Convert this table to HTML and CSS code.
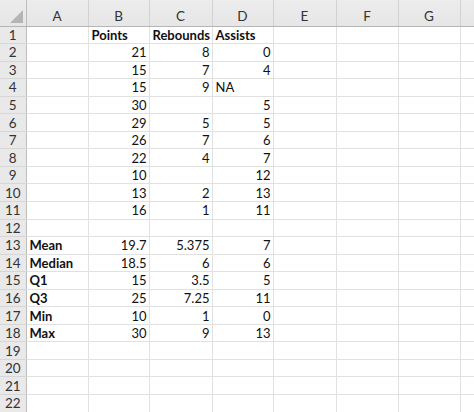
FILE: index.html
```html
<!DOCTYPE html>
<html>
<head>
<meta charset="utf-8">
<link rel="stylesheet" href="styles.css">
</head>
<body>
<table class="sheet">
  <colgroup>
    <col class="w-rh"><col class="w-a"><col class="w-b"><col class="w-c"><col class="w-d"><col class="w-e"><col class="w-f"><col class="w-g"><col class="w-h">
  </colgroup>
  <thead>
    <tr class="hdr">
      <th class="corner"><span class="tri"></span></th>
      <th>A</th><th>B</th><th>C</th><th>D</th><th>E</th><th>F</th><th>G</th><th class="last"></th>
    </tr>
  </thead>
  <tbody>
    <tr><th>1</th><td></td><td class="b">Points</td><td class="b">Rebounds</td><td class="b">Assists</td><td></td><td></td><td></td><td></td></tr>
    <tr><th>2</th><td></td><td class="n">21</td><td class="n">8</td><td class="n">0</td><td></td><td></td><td></td><td></td></tr>
    <tr><th>3</th><td></td><td class="n">15</td><td class="n">7</td><td class="n">4</td><td></td><td></td><td></td><td></td></tr>
    <tr><th>4</th><td></td><td class="n">15</td><td class="n">9</td><td>NA</td><td></td><td></td><td></td><td></td></tr>
    <tr><th>5</th><td></td><td class="n">30</td><td class="n"></td><td class="n">5</td><td></td><td></td><td></td><td></td></tr>
    <tr><th>6</th><td></td><td class="n">29</td><td class="n">5</td><td class="n">5</td><td></td><td></td><td></td><td></td></tr>
    <tr><th>7</th><td></td><td class="n">26</td><td class="n">7</td><td class="n">6</td><td></td><td></td><td></td><td></td></tr>
    <tr><th>8</th><td></td><td class="n">22</td><td class="n">4</td><td class="n">7</td><td></td><td></td><td></td><td></td></tr>
    <tr><th>9</th><td></td><td class="n">10</td><td class="n"></td><td class="n">12</td><td></td><td></td><td></td><td></td></tr>
    <tr><th>10</th><td></td><td class="n">13</td><td class="n">2</td><td class="n">13</td><td></td><td></td><td></td><td></td></tr>
    <tr><th>11</th><td></td><td class="n">16</td><td class="n">1</td><td class="n">11</td><td></td><td></td><td></td><td></td></tr>
    <tr><th>12</th><td></td><td></td><td></td><td></td><td></td><td></td><td></td><td></td></tr>
    <tr><th>13</th><td class="b">Mean</td><td class="n">19.7</td><td class="n">5.375</td><td class="n">7</td><td></td><td></td><td></td><td></td></tr>
    <tr><th>14</th><td class="b">Median</td><td class="n">18.5</td><td class="n">6</td><td class="n">6</td><td></td><td></td><td></td><td></td></tr>
    <tr><th>15</th><td class="b">Q1</td><td class="n">15</td><td class="n">3.5</td><td class="n">5</td><td></td><td></td><td></td><td></td></tr>
    <tr><th>16</th><td class="b">Q3</td><td class="n">25</td><td class="n">7.25</td><td class="n">11</td><td></td><td></td><td></td><td></td></tr>
    <tr><th>17</th><td class="b">Min</td><td class="n">10</td><td class="n">1</td><td class="n">0</td><td></td><td></td><td></td><td></td></tr>
    <tr><th>18</th><td class="b">Max</td><td class="n">30</td><td class="n">9</td><td class="n">13</td><td></td><td></td><td></td><td></td></tr>
    <tr><th>19</th><td></td><td></td><td></td><td></td><td></td><td></td><td></td><td></td></tr>
    <tr><th>20</th><td></td><td></td><td></td><td></td><td></td><td></td><td></td><td></td></tr>
    <tr><th>21</th><td></td><td></td><td></td><td></td><td></td><td></td><td></td><td></td></tr>
    <tr><th>22</th><td></td><td></td><td></td><td></td><td></td><td></td><td></td><td></td></tr>
  </tbody>
</table>
</body>
</html>
```

FILE: styles.css
```css
html, body {
  margin: 0;
  padding: 0;
  background: #ffffff;
  overflow: hidden;
}

.sheet {
  border-collapse: collapse;
  table-layout: fixed;
  width: 474px;
  font-family: Lato, "Liberation Sans", sans-serif;
  font-size: 13px;
  color: #111;
}

.w-rh { width: 26px; }
.w-a { width: 62px; }
.w-b { width: 61px; }
.w-c { width: 63px; }
.w-d { width: 61px; }
.w-e { width: 63px; }
.w-f { width: 62px; }
.w-g { width: 62px; }
.w-h { width: 14px; }

.sheet tr { height: 17.55px; }
.sheet tr.hdr { height: 26px; }

.sheet td {
  border-right: 1px solid #e1e1e1;
  border-bottom: 1px solid #e1e1e1;
  padding: 0 2px 0 3px;
  white-space: nowrap;
  overflow: visible;
  text-align: left;
  vertical-align: middle;
  line-height: 16px;
}

.sheet td.n { text-align: right; }
.sheet td.b { font-weight: 700; }

.sheet tbody th {
  background: #e9e9e9;
  color: #333;
  font-weight: 400;
  font-size: 13.5px;
  text-align: center;
  border-bottom: 1px solid #d6d6d6;
  border-right: 1px solid #bdbdbd;
  padding: 0;
  line-height: 16px;
}

.sheet thead th {
  background: linear-gradient(#ececec, #e6e6e6);
  color: #333;
  font-weight: 400;
  font-size: 13.5px;
  text-align: center;
  border-right: 1px solid #d2d2d2;
  border-bottom: 1px solid #b5b5b5;
  padding: 7px 0 0;
  vertical-align: middle;
}

.sheet thead th.last { border-right: none; }

.sheet thead th.corner {
  position: relative;
  border-right: 1px solid #bdbdbd;
}

.tri {
  position: absolute;
  right: 3px;
  bottom: 3px;
  width: 0;
  height: 0;
  border-left: 13px solid transparent;
  border-bottom: 13px solid #b5b5b5;
}
```
